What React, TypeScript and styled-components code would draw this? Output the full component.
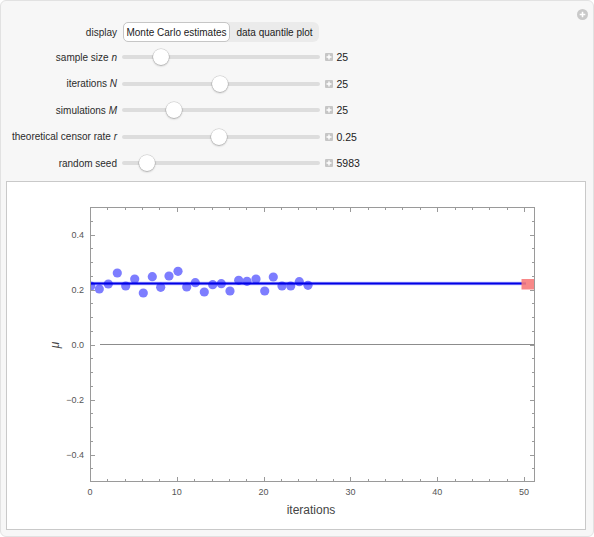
import React from "react";
import styled, { createGlobalStyle } from "styled-components";

const Global = createGlobalStyle`
  html, body { margin: 0; padding: 0; background: #ffffff; }
  body { font-family: "Liberation Sans", Arial, sans-serif; }
  * { box-sizing: border-box; }
`;

const Panel = styled.div`
  position: relative;
  width: 594px;
  height: 537px;
  border: 1px solid #e2e2e2;
  border-radius: 6px;
  background: #f7f7f7;
  padding: 21px 6px 6px 5px;
  display: flex;
  flex-direction: column;
`;

const CornerButton = styled.div`
  position: absolute;
  top: 8px;
  right: 5px;
  width: 11px;
  height: 11px;
  border-radius: 50%;
  background: #c9c9c9;
  display: flex;
  align-items: center;
  justify-content: center;
`;

const Controls = styled.div`
  display: grid;
  grid-template-columns: 111px 198px auto;
  grid-template-rows: 20px repeat(5, 23px);
  column-gap: 5px;
  row-gap: 3.5px;
  margin-bottom: 6.5px;
  align-items: center;
`;

const Label = styled.div`
  justify-self: end;
  font-size: 10px;
  color: #2b2b2b;
  white-space: nowrap;
  i { font-style: italic; }
`;

const Segmented = styled.div`
  display: flex;
  align-items: center;
  margin-left: 1px;
  width: 196px;
  height: 20px;
  border-radius: 6px;
  background: #ebebeb;
`;

const SegButton = styled.div<{ $active?: boolean }>`
  height: 20px;
  display: flex;
  align-items: center;
  justify-content: center;
  flex: ${(p) => (p.$active ? "0 0 107px" : "1 1 auto")};
  font-size: 10px;
  color: #222;
  white-space: nowrap;
  border-radius: 5px;
  background: ${(p) => (p.$active ? "#ffffff" : "transparent")};
  border: 1px solid ${(p) => (p.$active ? "#c6c6c6" : "transparent")};
`;

const Track = styled.div`
  position: relative;
  width: 198px;
  height: 4px;
  border-radius: 2px;
  background: #dddddd;
`;

const Thumb = styled.div`
  position: absolute;
  top: -6px;
  width: 16px;
  height: 16px;
  margin-left: -8px;
  border-radius: 50%;
  background: #ffffff;
  box-shadow: 0 0 0 0.5px rgba(0, 0, 0, 0.18), 0 1px 2px rgba(0, 0, 0, 0.25);
`;

const ValueCell = styled.div`
  display: flex;
  align-items: center;
  gap: 3.5px;
  font-size: 10.5px;
  color: #222;
`;

const PlusBox = styled.div`
  width: 8px;
  height: 8px;
  border-radius: 1px;
  background: #c6c6c6;
  display: flex;
  align-items: center;
  justify-content: center;
`;

const PlotBox = styled.div`
  width: 580px;
  height: 349px;
  border: 1px solid #c9c9c9;
  background: #ffffff;
  svg { display: block; }
`;

const PlusGlyph = ({ size }: { size: number }) => (
  <svg width={size} height={size} viewBox="0 0 8 8">
    <path d="M4 1.5v5M1.5 4h5" stroke="#ffffff" strokeWidth="1.4" />
  </svg>
);

type SliderRow = { label: React.ReactNode; pos: number; value: string };

const sliders: SliderRow[] = [
  { label: <>sample size <i>n</i></>, pos: 161, value: "25" },
  { label: <>iterations <i>N</i></>, pos: 220, value: "25" },
  { label: <>simulations <i>M</i></>, pos: 174, value: "25" },
  { label: <>theoretical censor rate <i>r</i></>, pos: 219, value: "0.25" },
  { label: <>random seed</>, pos: 147, value: "5983" },
];

const X = (v: number) => 90 + v * 8.68;
const Y = (v: number) => 344.7 - v * 275;

const points: [number, number][] = [
  [90.7, 286], [99.3, 289], [108.3, 284], [117.3, 273], [125.7, 286],
  [134.7, 279], [143.3, 293], [152.3, 276.7], [160.7, 287.3], [169, 276],
  [178, 271.3], [186.7, 287], [195.3, 282.7], [204.3, 292], [212.7, 284.7],
  [221.3, 283.7], [230, 291], [238.7, 280.3], [247, 281.3], [256, 279],
  [264.7, 291], [273.3, 277], [282, 286], [290.7, 286], [299.3, 281.7],
  [308, 285.3],
];

const FL = 90.5, FR = 534.5, FT = 207.5, FB = 481.5;

function Plot() {
  const ticks: React.ReactNode[] = [];
  const axis = "#9a9a9a";
  for (let v = 0; v <= 50; v += 2) {
    const major = v % 10 === 0;
    const len = major ? 4.5 : 2.5;
    const x = Math.round(X(v)) + 0.5;
    ticks.push(<line key={"xb" + v} x1={x} x2={x} y1={FB} y2={FB - len} stroke={axis} />);
    ticks.push(<line key={"xt" + v} x1={x} x2={x} y1={FT} y2={FT + len} stroke={axis} />);
  }
  for (let i = -10; i <= 10; i++) {
    const v = i * 0.05;
    const major = i % 4 === 0;
    const len = major ? 4.5 : 2.5;
    const y = Math.round(Y(v)) + 0.5;
    if (y < FT || y > FB) continue;
    ticks.push(<line key={"yl" + i} x1={FL} x2={FL + len} y1={y} y2={y} stroke={axis} />);
    ticks.push(<line key={"yr" + i} x1={FR} x2={FR - len} y1={y} y2={y} stroke={axis} />);
  }
  const yLabels = [0.4, 0.2, 0, -0.2, -0.4];
  const xLabels = [0, 10, 20, 30, 40, 50];
  const labelStyle = { fontFamily: "Liberation Sans, Arial, sans-serif" };
  return (
    <svg width={578} height={347} viewBox="0 0 578 347">
      <g transform="translate(-7 -182)">
        <defs>
          <clipPath id="frame">
            <rect x={FL} y={FT} width={FR - FL} height={FB - FT} />
          </clipPath>
        </defs>
        <g clipPath="url(#frame)">
          <line x1={100} x2={FR} y1={344.5} y2={344.5} stroke="#8c8c8c" strokeWidth={1} />
          {points.map(([x, y], i) => (
            <circle key={i} cx={x} cy={y} r={4.6} fill="#7d7dff" />
          ))}
          <line x1={FL} x2={526} y1={283.5} y2={283.5} stroke="#0000ff" strokeOpacity={0.28} strokeWidth={3.5} />
          <line x1={FL} x2={526} y1={283.5} y2={283.5} stroke="#0000e6" strokeWidth={1.8} />
          <rect x={521.5} y={279} width={13} height={10.5} fill="#f77b7b" fillOpacity={0.9} />
        </g>
        <rect x={FL} y={FT} width={FR - FL} height={FB - FT} fill="none" stroke={axis} />
        {ticks}
        {yLabels.map((v) => (
          <text key={v} x={84} y={Y(v) + 3.2} fontSize={9} fill="#555" textAnchor="end" style={labelStyle}>
            {v < 0 ? "\u2212" + Math.abs(v).toFixed(1) : v.toFixed(1)}
          </text>
        ))}
        {xLabels.map((v) => (
          <text key={v} x={X(v)} y={495} fontSize={9} fill="#555" textAnchor="middle" style={labelStyle}>
            {v}
          </text>
        ))}
        <text
          x={0}
          y={0}
          transform="translate(59 345) rotate(-90)"
          fontSize={12}
          fontStyle="italic"
          fill="#444"
          textAnchor="middle"
          style={labelStyle}
        >
          μ
        </text>
        <text x={311} y={514} fontSize={12} fill="#444" textAnchor="middle" style={labelStyle}>
          iterations
        </text>
      </g>
    </svg>
  );
}

export default function App() {
  return (
    <>
      <Global />
      <Panel>
        <CornerButton>
          <PlusGlyph size={9} />
        </CornerButton>
        <Controls>
          <Label>display</Label>
          <Segmented>
            <SegButton $active>Monte Carlo estimates</SegButton>
            <SegButton>data quantile plot</SegButton>
          </Segmented>
          <div />
          {sliders.map((s, i) => (
            <React.Fragment key={i}>
              <Label>{s.label}</Label>
              <Track>
                <Thumb style={{ left: s.pos - 122 }} />
              </Track>
              <ValueCell>
                <PlusBox>
                  <PlusGlyph size={8} />
                </PlusBox>
                {s.value}
              </ValueCell>
            </React.Fragment>
          ))}
        </Controls>
        <PlotBox>
          <Plot />
        </PlotBox>
      </Panel>
    </>
  );
}
